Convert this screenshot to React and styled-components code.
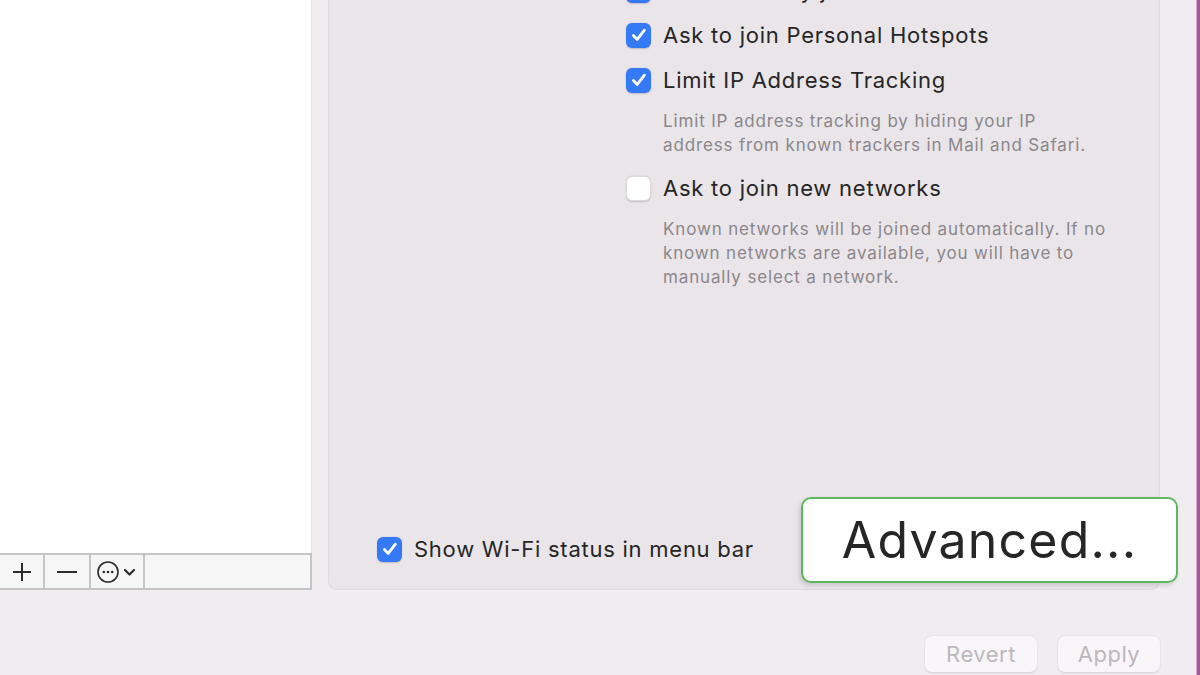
import React from "react";
import styled, { createGlobalStyle } from "styled-components";

const GlobalStyle = createGlobalStyle`
  html, body {
    margin: 0;
    padding: 0;
    background: #f0ecf0;
    font-family: "Inter", "Liberation Sans", sans-serif;
    -webkit-font-smoothing: antialiased;
  }
  #root {
    height: 675px;
    overflow: hidden;
  }
`;

const CheckIcon = () => (
  <svg width="18" height="18" viewBox="0 0 18 18">
    <path
      d="M3.4 9.6 L7.2 13.4 L14.4 4.2"
      fill="none"
      stroke="#fff"
      strokeWidth="2.8"
      strokeLinecap="round"
      strokeLinejoin="round"
    />
  </svg>
);

const Checkbox = ({ checked }) => (
  <St.Box $checked={checked}>{checked && <CheckIcon />}</St.Box>
);

const PlusIcon = () => (
  <svg width="20" height="20" viewBox="0 0 20 20">
    <path d="M10 1v18M1 10h18" stroke="#2b2b2b" strokeWidth="2" />
  </svg>
);

const MinusIcon = () => (
  <svg width="22" height="20" viewBox="0 0 22 20">
    <path d="M1 10h20" stroke="#2b2b2b" strokeWidth="2" />
  </svg>
);

const MoreIcon = () => (
  <svg width="40" height="24" viewBox="0 0 40 24">
    <circle cx="11" cy="12" r="10" fill="none" stroke="#2b2b2b" strokeWidth="1.6" />
    <circle cx="6.8" cy="12" r="1.3" fill="#2b2b2b" />
    <circle cx="11" cy="12" r="1.3" fill="#2b2b2b" />
    <circle cx="15.2" cy="12" r="1.3" fill="#2b2b2b" />
    <path
      d="M28 10l4.5 4.5L37 10"
      fill="none"
      stroke="#2b2b2b"
      strokeWidth="2.2"
      strokeLinecap="round"
      strokeLinejoin="round"
    />
  </svg>
);

const options = [
  { label: "Automatically join this network", checked: true },
  { label: "Ask to join Personal Hotspots", checked: true },
  {
    label: "Limit IP Address Tracking",
    checked: true,
    note: ["Limit IP address tracking by hiding your IP", "address from known trackers in Mail and Safari."],
  },
  {
    label: "Ask to join new networks",
    checked: false,
    note: [
      "Known networks will be joined automatically. If no",
      "known networks are available, you will have to",
      "manually select a network.",
    ],
  },
];

const App = () => {
  return (
    <>
      <GlobalStyle />
      <St.Window>
        <St.Main>
          <St.Sidebar>
            <St.List />
            <St.Toolbar>
              <St.ToolButton $w={45}>
                <PlusIcon />
              </St.ToolButton>
              <St.ToolButton $w={46}>
                <MinusIcon />
              </St.ToolButton>
              <St.ToolButton $w={54}>
                <MoreIcon />
              </St.ToolButton>
            </St.Toolbar>
          </St.Sidebar>

          <St.Panel>
            <St.Options>
              {options.map((o) => (
                <St.Option key={o.label}>
                  <St.CheckRow>
                    <Checkbox checked={o.checked} />
                    <St.Label>{o.label}</St.Label>
                  </St.CheckRow>
                  {o.note && (
                    <St.Note>
                      {o.note.map((line) => (
                        <div key={line}>{line}</div>
                      ))}
                    </St.Note>
                  )}
                </St.Option>
              ))}
            </St.Options>

            <St.BottomRow>
              <St.StatusRow>
                <Checkbox checked />
                <St.Label>Show Wi-Fi status in menu bar</St.Label>
              </St.StatusRow>
              <St.AdvancedButton>Advanced...</St.AdvancedButton>
            </St.BottomRow>
          </St.Panel>
        </St.Main>

        <St.Footer>
          <St.FooterButton $w={112}>Revert</St.FooterButton>
          <St.FooterButton $w={102}>Apply</St.FooterButton>
        </St.Footer>
      </St.Window>
    </>
  );
};

export default App;

const St = {
  Window: styled.div`
    width: 1197px;
    height: 675px;
    border-right: 3px solid #a6589a;
    box-shadow: inset -1px 0 0 #d9a9cc;
    display: flex;
    flex-direction: column;
    background: #f0ecf0;
  `,

  Main: styled.div`
    display: flex;
    gap: 16px;
    height: 590px;
  `,

  Sidebar: styled.div`
    width: 312px;
    display: flex;
    flex-direction: column;
  `,

  List: styled.div`
    flex: 1;
    background: #ffffff;
    border-right: 1px solid #e4e2e4;
  `,

  Toolbar: styled.div`
    height: 33px;
    display: flex;
    background: #f6f6f6;
    border: 2px solid #c6c6c6;
    border-left: none;
  `,

  ToolButton: styled.div`
    width: ${({ $w }) => $w}px;
    box-sizing: border-box;
    display: flex;
    align-items: center;
    justify-content: center;
    border-right: 2px solid #c6c6c6;
  `,

  Panel: styled.div`
    width: 832px;
    box-sizing: border-box;
    background: #e9e5e9;
    border: 1px solid #dedade;
    border-top: none;
    border-radius: 0 0 9px 9px;
    display: flex;
    flex-direction: column;
    justify-content: space-between;
  `,

  Options: styled.div`
    margin-top: -26px;
    padding-left: 297px;
    display: flex;
    flex-direction: column;
    gap: 13px;
  `,

  Option: styled.div`
    display: flex;
    flex-direction: column;
    gap: 13px;
  `,

  CheckRow: styled.div`
    height: 32px;
    display: flex;
    align-items: center;
    gap: 12px;
  `,

  Box: styled.div`
    width: 25px;
    height: 25px;
    box-sizing: border-box;
    border-radius: 6px;
    flex-shrink: 0;
    display: flex;
    align-items: center;
    justify-content: center;
    background: ${({ $checked }) => ($checked ? "#3479f6" : "#ffffff")};
    border: ${({ $checked }) => ($checked ? "none" : "1px solid #dcd8dc")};
    box-shadow: 0 0.5px 1.5px rgba(0, 0, 0, 0.18);
  `,

  Label: styled.span`
    font-size: 22px;
    line-height: 32px;
    letter-spacing: 0.75px;
    color: #262626;
    white-space: nowrap;
  `,

  Note: styled.div`
    padding-left: 37px;
    margin-bottom: 2px;
    font-size: 17px;
    line-height: 24px;
    letter-spacing: 0.85px;
    color: #8b878b;
    white-space: nowrap;
  `,

  BottomRow: styled.div`
    display: flex;
    justify-content: space-between;
    align-items: flex-end;
    padding-left: 48px;
    margin-right: -19px;
    margin-bottom: 6px;
  `,

  StatusRow: styled.div`
    height: 32px;
    display: flex;
    align-items: center;
    gap: 12px;
    margin-bottom: 18px;
  `,

  AdvancedButton: styled.button`
    width: 377px;
    height: 86px;
    box-sizing: border-box;
    background: #ffffff;
    border: 2px solid #5cb85c;
    border-radius: 10px;
    box-shadow: -2px 3px 4px rgba(0, 0, 0, 0.12);
    font-family: "Inter", "Liberation Sans", sans-serif;
    font-size: 50px;
    letter-spacing: 1.2px;
    color: #262626;
    padding: 0;
    display: flex;
    align-items: center;
    justify-content: center;
  `,

  Footer: styled.div`
    flex: 1;
    display: flex;
    justify-content: flex-end;
    align-items: flex-end;
    gap: 21px;
    padding: 0 37px 3px 0;
  `,

  FooterButton: styled.button`
    width: ${({ $w }) => $w}px;
    height: 36px;
    background: #f8f6f8;
    border: none;
    border-radius: 7px;
    box-shadow: 0 0.5px 2px rgba(0, 0, 0, 0.12);
    font-family: "Inter", "Liberation Sans", sans-serif;
    font-size: 22px;
    letter-spacing: 0.5px;
    color: #bcb8bc;
    padding: 0;
  `,
};
